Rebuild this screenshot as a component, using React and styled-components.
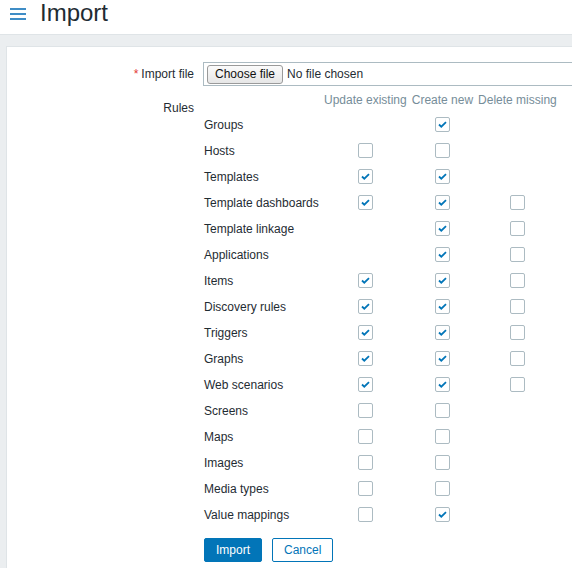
import React from "react";
import styled, { createGlobalStyle } from "styled-components";

const GlobalStyle = createGlobalStyle`
  html, body {
    margin: 0;
    padding: 0;
    background: #ebeef0;
    font-family: "Liberation Sans", Arial, sans-serif;
    font-size: 12px;
    color: #1f2c33;
    overflow: hidden;
  }
`;

const Header = styled.header`
  height: 34px;
  background: #ffffff;
  border-bottom: 1px solid #dfe4e7;
  display: flex;
  align-items: center;
  padding-left: 10px;
  gap: 14px;
`;

const Title = styled.h1`
  margin: 0;
  font-size: 24px;
  font-weight: normal;
  color: #1f2c33;
  line-height: 1;
  margin-top: -8px;
`;

const Burger = styled.button`
  border: none;
  background: none;
  padding: 0;
  margin-top: -6px;
  display: flex;
  flex-direction: column;
  gap: 3px;
  span {
    display: block;
    width: 16px;
    height: 2px;
    background: #3f8dc6;
  }
`;

const Panel = styled.main`
  box-sizing: border-box;
  margin: 11px 0 0 6px;
  background: #ffffff;
  border: 1px solid #dfe4e7;
  border-right: none;
  border-bottom: none;
  padding: 15px 0 0;
  height: calc(100vh - 46px);
`;

const FormRow = styled.div`
  display: grid;
  grid-template-columns: 187px 1fr;
  column-gap: 10px;
  margin-bottom: ${(p) => p.gap || 0}px;
`;

const Label = styled.label`
  text-align: right;
  line-height: 24px;
`;

const Required = styled.span`
  color: #e33734;
  margin-right: 3px;
`;

const FileBox = styled.div`
  display: flex;
  align-items: center;
  height: 22px;
  margin-left: -1px;
  border: 1px solid #acbbc2;
  border-right: none;
  padding: 0 4px 0 3px;
  gap: 4px;
  font-size: 12px;
`;

const ChooseButton = styled.span`
  height: 17px;
  line-height: 17px;
  padding: 0 7px;
  border: 1px solid #9a9a9a;
  border-radius: 3px;
  background: linear-gradient(#fbfbfb, #e6e6e6);
  color: #111;
`;

const RulesTable = styled.table`
  border-collapse: collapse;
  margin-top: -8px;
  th {
    font-weight: normal;
    color: #768d99;
    padding: 0 3px 0 2px;
    height: 24px;
    text-align: center;
    white-space: nowrap;
  }
  td {
    height: 26px;
    padding: 0;
    text-align: center;
  }
  td:first-child {
    text-align: left;
    width: 118px;
  }
`;

const Box = styled.span`
  display: inline-block;
  vertical-align: middle;
  width: 13px;
  height: 13px;
  margin-top: -2px;
  border: 1px solid #acbbc2;
  border-radius: 2px;
  background: #fff;
  position: relative;
  svg {
    position: absolute;
    left: 2px;
    top: 3px;
  }
`;

const Buttons = styled.div`
  display: flex;
  gap: 10px;
  padding-top: 10px;
`;

const Button = styled.button`
  height: 24px;
  padding: 0 11px;
  border-radius: 2px;
  border: 1px solid #0275b8;
  background: ${(p) => (p.primary ? "#0275b8" : "#ffffff")};
  color: ${(p) => (p.primary ? "#ffffff" : "#0275b8")};
  font-family: "Liberation Sans", Arial, sans-serif;
  font-size: 12px;
`;

const Check = ({ on }) => (
  <Box>
    {on && (
      <svg width="9" height="7" viewBox="0 0 9 7">
        <path d="M1 3.5 L3.3 5.7 L8 1.2" fill="none" stroke="#0275b8" strokeWidth="1.8" />
      </svg>
    )}
  </Box>
);

// null = no checkbox, true/false = checked state
const rules = [
  ["Groups", null, true, null],
  ["Hosts", false, false, null],
  ["Templates", true, true, null],
  ["Template dashboards", true, true, false],
  ["Template linkage", null, true, false],
  ["Applications", null, true, false],
  ["Items", true, true, false],
  ["Discovery rules", true, true, false],
  ["Triggers", true, true, false],
  ["Graphs", true, true, false],
  ["Web scenarios", true, true, false],
  ["Screens", false, false, null],
  ["Maps", false, false, null],
  ["Images", false, false, null],
  ["Media types", false, false, null],
  ["Value mappings", false, true, null],
];

const Cell = ({ v }) => <td>{v === null ? null : <Check on={v} />}</td>;

export default function App() {
  return (
    <>
      <GlobalStyle />
      <Header>
        <Burger aria-label="menu">
          <span />
          <span />
          <span />
        </Burger>
        <Title>Import</Title>
      </Header>
      <Panel>
        <FormRow gap={10}>
          <Label>
            <Required>*</Required>Import file
          </Label>
          <FileBox>
            <ChooseButton>Choose file</ChooseButton>
            <span>No file chosen</span>
          </FileBox>
        </FormRow>
        <FormRow>
          <Label>Rules</Label>
          <div>
            <RulesTable>
              <thead>
                <tr>
                  <th />
                  <th>Update existing</th>
                  <th>Create new</th>
                  <th>Delete missing</th>
                </tr>
              </thead>
              <tbody>
                {rules.map(([name, a, b, c]) => (
                  <tr key={name}>
                    <td>{name}</td>
                    <Cell v={a} />
                    <Cell v={b} />
                    <Cell v={c} />
                  </tr>
                ))}
              </tbody>
            </RulesTable>
            <Buttons>
              <Button primary>Import</Button>
              <Button>Cancel</Button>
            </Buttons>
          </div>
        </FormRow>
      </Panel>
    </>
  );
}
